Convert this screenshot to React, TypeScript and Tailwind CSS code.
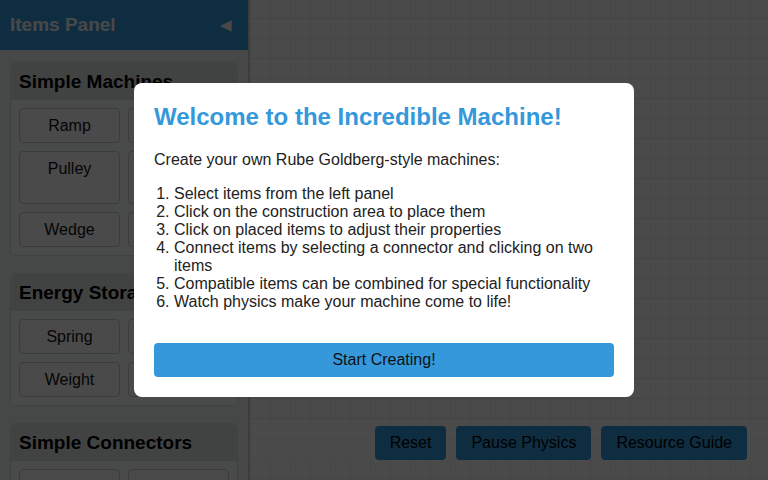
import { useState } from "react";

const categories = [
  {
    name: "Simple Machines",
    items: ["Ramp", "Lever", "Pulley", "Wheel and Axle", "Wedge", "Screw"],
  },
  {
    name: "Energy Storage",
    items: ["Spring", "Battery", "Weight", "Flywheel"],
  },
  {
    name: "Simple Connectors",
    items: ["Rope", "Chain"],
  },
];

const steps = [
  "Select items from the left panel",
  "Click on the construction area to place them",
  "Click on placed items to adjust their properties",
  "Connect items by selecting a connector and clicking on two items",
  "Compatible items can be combined for special functionality",
  "Watch physics make your machine come to life!",
];

export default function App() {
  const [open, setOpen] = useState(true);

  return (
    <div className="relative flex h-[480px] w-[768px] overflow-hidden font-['Liberation_Sans',Arial,sans-serif] text-[#222]">
      {/* Items panel */}
      <aside className="flex w-[250px] shrink-0 flex-col overflow-hidden border-r-2 border-[#c8cdd0] bg-[#ecf0f1]">
        <div className="flex h-[50px] shrink-0 items-center justify-between bg-[#3498db] pl-[10px] pr-[16px] text-[#f0f0f0]">
          <h2 className="text-[19px] font-bold">Items Panel</h2>
          <span className="text-[15px]">◀</span>
        </div>
        <div className="flex shrink-0 flex-col gap-[17px] px-[10px] pt-[12px]">
          {categories.map((cat) => (
            <div
              key={cat.name}
              className="shrink-0 overflow-hidden rounded-md border border-[#d6d9db] bg-[#f6f7f8]"
            >
              <h3 className="bg-[#dadfe2] px-2 py-2 text-[19px] font-bold leading-[21px] text-black">
                {cat.name}
              </h3>
              <div className="grid grid-cols-2 gap-2 p-2">
                {cat.items.map((item) => (
                  <div
                    key={item}
                    className="rounded border border-[#c9c9c9] bg-[#f7f7f7] px-2 py-[7.5px] text-center text-[16px] leading-[18px] text-[#111]"
                  >
                    {item}
                  </div>
                ))}
              </div>
            </div>
          ))}
        </div>
      </aside>

      {/* Construction area */}
      <main className="relative flex-1 bg-[#f8f8f8] bg-[linear-gradient(#e4e4e4_1px,transparent_1px),linear-gradient(90deg,#eaeaea_1px,transparent_1px)] bg-[size:20px_20px] bg-[position:0_-2px]">
        <div className="absolute bottom-[20px] left-0 right-0 flex justify-end gap-[10px] bg-white/40 pr-[21px]">
          <button className="rounded bg-[#3498db] px-[15px] py-2 text-[16px] leading-[18px] text-black">
            Reset
          </button>
          <button className="rounded bg-[#3498db] px-[15px] py-2 text-[16px] leading-[18px] text-black">
            Pause Physics
          </button>
          <button className="rounded bg-[#3498db] px-[15px] py-2 text-[16px] leading-[18px] text-black">
            Resource Guide
          </button>
        </div>
      </main>

      {/* Welcome modal */}
      {open && (
        <div className="absolute inset-0 flex items-center justify-center bg-black/70">
          <div className="w-[500px] rounded-lg bg-white p-5">
            <h2 className="mb-5 text-[24px] font-bold leading-[28px] text-[#3498db]">
              Welcome to the Incredible Machine!
            </h2>
            <p className="mb-4 text-[16px] leading-[18px]">
              Create your own Rube Goldberg-style machines:
            </p>
            <ol className="mb-8 list-decimal pl-5 text-[16px] leading-[18px]">
              {steps.map((s) => (
                <li key={s}>{s}</li>
              ))}
            </ol>
            <button
              onClick={() => setOpen(false)}
              className="w-full rounded bg-[#3498db] py-2 text-[16px] leading-[18px] text-[#111]"
            >
              Start Creating!
            </button>
          </div>
        </div>
      )}
    </div>
  );
}
